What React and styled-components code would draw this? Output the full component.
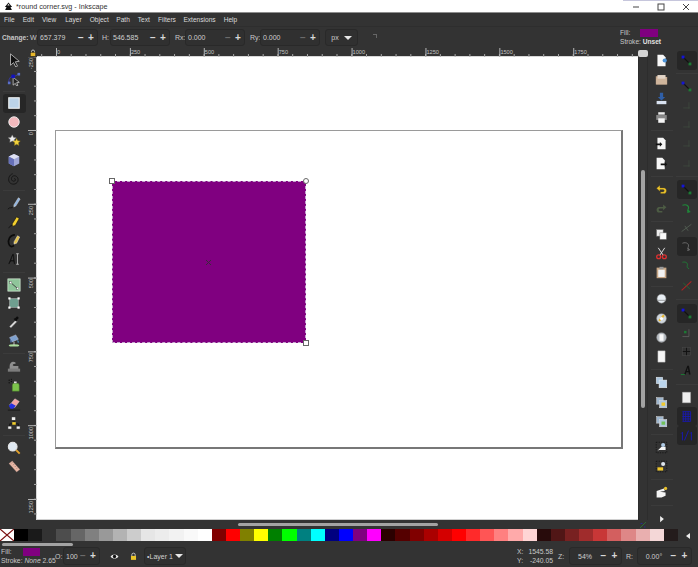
import React from "react";
import styled, { createGlobalStyle } from "styled-components";

const GlobalStyle = createGlobalStyle`
    html, body {
        margin: 0;
        padding: 0;
        overflow: hidden;
        background: #333;
    }
    * {
        box-sizing: border-box;
    }
`

const Window = styled.div`
    width: 698px;
    height: 567px;
    display: flex;
    flex-direction: column;
    overflow: hidden;
    background: #333333;
    color: #d8d8d8;
    font-family: "Liberation Sans", sans-serif;
    font-size: 7px;
`

const TitleBar = styled.div`
    height: 13px;
    flex: none;
    display: flex;
    align-items: center;
    padding-left: 4px;
    background: #ffffff;
    border-bottom: 1px solid #8d8d8d;
    color: #333;
    font-size: 7.2px;
`

const TitleText = styled.span`
    margin-left: 3px;
`

const WindowButtons = styled.div`
    margin-left: auto;
    display: flex;
    height: 100%;
    border-top: 1px solid #c6c6dc;
`

const WindowButton = styled.div`
    width: 25px;
    display: flex;
    align-items: center;
    justify-content: center;
`

const MenuBar = styled.div`
    height: 13px;
    flex: none;
    display: flex;
    align-items: center;
    padding-left: 4px;
    color: #dcdcdc;
    font-size: 6.6px;
`

const MenuItem = styled.span`
    margin-right: ${p => p.$gap}px;
`

const ControlBar = styled.div`
    height: 22px;
    flex: none;
    display: flex;
    align-items: center;
    padding-left: 2px;
    border-top: 1px solid #2e2e2e;
`

const Label = styled.span`
    flex: none;
    width: ${p => p.$w}px;
    margin-left: ${p => p.$ml || 0}px;
    font-weight: ${p => (p.$bold ? 700 : 400)};
    font-size: ${p => (p.$bold ? 6.6 : 7)}px;
    color: #c8c8c8;
    white-space: nowrap;
`

const Field = styled.div`
    flex: none;
    width: ${p => p.$w}px;
    height: ${p => p.$h || 17}px;
    margin-left: ${p => p.$ml || 0}px;
    display: flex;
    align-items: center;
    padding: 0 1px 0 2px;
    background: #303030;
    border: 1px solid #292929;
    border-radius: 3px;
    white-space: nowrap;
`

const FieldValue = styled.span`
    flex: 1;
    text-align: ${p => p.$align || "left"};
    color: #cfcfcf;
`

const Step = styled.span`
    flex: none;
    width: ${p => p.$w || 10}px;
    text-align: center;
    font-size: 10px;
    line-height: 10px;
    font-weight: 700;
    color: ${p => (p.$dim ? "#6a6a6a" : "#d8d8d8")};
`

const DropCaret = styled.span`
    flex: none;
    width: 0;
    height: 0;
    margin: 0 ${p => p.$mr || 4}px 0 2px;
    border-left: 4px solid transparent;
    border-right: 4px solid transparent;
    border-top: 4px solid #e8e8e8;
`

const CornerMark = styled.span`
    flex: none;
    width: 4px;
    height: 4px;
    margin-left: 15px;
    margin-bottom: 3px;
    border-top: 1px solid #666;
    border-right: 1px solid #666;
`

const StyleBlock = styled.div`
    margin-left: auto;
    margin-right: 40px;
    width: 38px;
    display: flex;
    flex-direction: column;
    font-size: 6.6px;
    line-height: 8.5px;
    color: #c8c8c8;
    white-space: nowrap;
`

const FillRow = styled.div`
    display: flex;
    justify-content: space-between;
    align-items: center;
    width: ${p => p.$w || "auto"};
`

const Swatch = styled.span`
    width: ${p => p.$w}px;
    height: 8px;
    background: #800080;
`

const Strong = styled.b`
    color: #e0e0e0;
`

const Main = styled.div`
    flex: 1;
    min-height: 0;
    display: flex;
`

const ToolColumn = styled.div`
    flex: none;
    width: ${p => p.$w}px;
    display: flex;
    flex-direction: column;
    align-items: center;
    padding-top: ${p => p.$top}px;
`

const ToolButton = styled.div`
    flex: none;
    width: ${p => p.$w}px;
    height: ${p => p.$h}px;
    display: flex;
    align-items: center;
    justify-content: center;
    border-radius: 3px;
    background: ${p => (p.$active ? "#262626" : "transparent")};
`

const ToolSep = styled.div`
    flex: none;
    width: 22px;
    height: ${p => p.$h}px;
    display: flex;
    align-items: center;
    &::after {
        content: "";
        width: 100%;
        height: 1px;
        background: #3b3b3b;
    }
`

const Workspace = styled.div`
    flex: 1;
    min-width: 0;
    display: grid;
    grid-template-columns: 9px 1fr 10px;
    grid-template-rows: 9px 1fr 9px;
`

const RulerCorner = styled.div`
    display: flex;
    align-items: center;
    justify-content: center;
`

const HRuler = styled.div`
    position: relative;
    overflow: hidden;
    background:
        linear-gradient(to right, #b5b5b5 1px, transparent 1px) 19px 0 / 73.9px 9px repeat-x,
        linear-gradient(to right, #a8a8a8 1px, transparent 1px) 4.2px 100% / 14.78px 3px repeat-x,
        linear-gradient(#d8d8d8, #d8d8d8) 0 100% / 100% 1px no-repeat,
        #333;
`

const VRuler = styled.div`
    position: relative;
    overflow: hidden;
    background:
        linear-gradient(#b5b5b5 1px, transparent 1px) 0 -0.8px / 9px 73.8px repeat-y,
        linear-gradient(#a8a8a8 1px, transparent 1px) 100% -0.8px / 3px 14.76px repeat-y,
        linear-gradient(#d8d8d8, #d8d8d8) 100% 0 / 1px 100% no-repeat,
        #333;
`

const HTick = styled.span.attrs(p => ({ style: { left: p.$at } }))`
    position: absolute;
    top: 0;
    font-size: 5.6px;
    line-height: 8px;
    color: #c4c4c4;
`

const VTick = styled.span.attrs(p => ({ style: { top: p.$at } }))`
    position: absolute;
    left: 0;
    font-size: 5.6px;
    line-height: 7px;
    color: #c4c4c4;
    writing-mode: vertical-rl;
    transform: rotate(180deg);
`

const Canvas = styled.div`
    position: relative;
    background: #ffffff;
    overflow: hidden;
    border-bottom: 1px solid #d0d0d0;
`

const Page = styled.div`
    position: absolute;
    left: 18px;
    top: 73px;
    width: 568px;
    height: 319px;
    border: 1px solid #9a9a9a;
    border-right: 2px solid #777;
    border-bottom: 2px solid #777;
    background: #fff;
`

const PurpleRect = styled.div`
    position: absolute;
    left: 75px;
    top: 124px;
    width: 194px;
    height: 162px;
    background: #800080;
    background-clip: border-box;
    border: 1px dashed #c6a8cf;
`

const Handle = styled.div`
    position: absolute;
    left: ${p => p.$x}px;
    top: ${p => p.$y}px;
    width: 6px;
    height: 6px;
    background: #fff;
    border: 1px solid #666;
    border-radius: ${p => (p.$round ? "50%" : "0")};
`

const CenterMark = styled.svg`
    position: absolute;
    left: 168px;
    top: 202px;
`

const VScroll = styled.div`
    display: flex;
    justify-content: center;
    padding-top: 113px;
    background: #333;
    border-left: 1px solid #2d2d2d;
    border-right: 1px solid #2d2d2d;
`

const VThumb = styled.div`
    width: 4px;
    height: 238px;
    border-radius: 2px;
    background: #a3a3a3;
`

const ScrollCap = styled.div`
    grid-column: 3;
    grid-row: 1;
    margin-top: 2px;
    background: #d5d5d5;
    border-radius: 2px;
`

const HScroll = styled.div`
    grid-column: 2;
    padding: 3px 0 0 201px;
    background: #333;
`

const HThumb = styled.div`
    width: ${p => p.$w}px;
    height: 3px;
    border-radius: 2px;
    background: #a3a3a3;
`

const GripCell = styled.div`
    grid-column: 3;
    display: flex;
    align-items: center;
    justify-content: center;
`

const Palette = styled.div`
    height: 12px;
    flex: none;
    display: flex;
    align-items: stretch;
    position: relative;
    padding-right: 20px;
`

const Chip = styled.div`
    width: 14.125px;
    flex: none;
    background: ${p => p.$color};
`

const PaletteArrow = styled.span`
    position: absolute;
    left: 686px;
    top: 4px;
    width: 0;
    height: 0;
    border-top: 3px solid transparent;
    border-bottom: 3px solid transparent;
    border-right: 4px solid #eee;
`

const PaletteScroll = styled.div`
    height: 5px;
    flex: none;
    padding: 2px 0 0 2px;
`

const StatusBar = styled.div`
    height: 21px;
    flex: none;
    display: flex;
    align-items: center;
    padding: 0 6px 1px 1px;
`

const StatusStyle = styled.div`
    flex: none;
    width: 54px;
    font-size: 6.8px;
    line-height: 9px;
    color: #c8c8c8;
    white-space: nowrap;
`

const Italic = styled.i`
    font-style: italic;
`

const StatusIcon = styled.span`
    flex: none;
    margin-left: ${p => p.$ml}px;
    display: flex;
`

const Coords = styled.div`
    margin-left: auto;
    width: 36px;
    font-size: 6.8px;
    line-height: 9.5px;
    color: #c8c8c8;
`

const CoordRow = styled.div`
    display: flex;
    justify-content: space-between;
`

/* tiny toolbar pictures, all in a 16 box */
const ART = {
    selector: <path d="M4 1l0 13 3.500-3 2.500 5 2-1-2.500-5 4.500-.5z" fill="#111" stroke="#ddd" strokeWidth=".8" />,
    node: <><path d="M7 6l0 9 2.500-2 1.500 3 1.500-.8-1.500-3 3-.4z" fill="#222" stroke="#ddd" strokeWidth=".8" /><path d="M2 12C2 7 4 5 7 5s4-1 6-3" fill="none" stroke="#3a3ad0" strokeWidth=".8" /><rect x="5" y="3" width="4" height="4" fill="#1212c0" /><rect x="12" y="1" width="3" height="3" fill="#5a70c8" /><rect x="1" y="11" width="3" height="3" fill="#5a70c8" /></>,
    rect: <rect x="2" y="2" width="12" height="12" fill="#bcd3e8" stroke="#f4f4f4" strokeWidth="1.200" />,
    circle: <circle cx="8" cy="8" r="6" fill="#f3b9bd" stroke="#f4f4f4" strokeWidth="1" />,
    star: <><path d="M6 1l1.500 3 3 .4-2.200 2 .6 3-2.900-1.500-2.800 1.500.5-3-2.200-2 3-.4z" fill="#eee" stroke="#888" strokeWidth=".5" /><path d="M11 5l1.300 2.700 2.900.4-2.100 2 .5 2.900-2.600-1.400-2.600 1.400.5-2.900-2.100-2 2.900-.4z" fill="#f3d33d" stroke="#8a7414" strokeWidth=".5" /></>,
    box: <><path d="M8 1l6 3v8l-6 3-6-3V4z" fill="#9fa6d6" /><path d="M2 4l6 3 6-3-6-3z" fill="#dfe1f2" /><path d="M8 7v8l-6-3V4z" fill="#6670b8" /></>,
    spiral: <path d="M8 8c1-1 2 0 1.600 1.300C9 11 6.500 11 5.500 9.300 4.200 7 6 4 8.800 4.300 12 4.700 13.500 8 12.200 11 10.500 14.500 5.500 14.800 3 12 .5 8.500 2.500 3 6.500 2" fill="none" stroke="#151515" strokeWidth="1.100" />,
    pencil: <><path d="M8 10L13 2l2 1.500-5 8-2.400 1z" fill="#8fb4e0" stroke="#eee" strokeWidth=".5" /><path d="M1 15c2-3 5 0 6-3" fill="none" stroke="#111" strokeWidth="1" /></>,
    pen: <><path d="M6 10l5-8 3 2-4.500 8-3.500 1z" fill="#f2cf2d" stroke="#111" strokeWidth=".7" /><path d="M2 15c1-2 2-3 4-3" fill="none" stroke="#111" strokeWidth="1" /></>,
    callig: <><path d="M8 9l4-7 2.500 1.500-3.500 7-3 1z" fill="#e4c34a" stroke="#eee" strokeWidth=".5" /><path d="M9 1C3 1 1 7 2 11s4 4 6 2" fill="none" stroke="#0b0b0b" strokeWidth="2" /></>,
    text: <><path d="M1 14L6 2h2l1.500 12h-2l-.3-3H4.500L3 14zM5.200 9h1.800L6.600 5z" fill="#111" stroke="#555" strokeWidth=".3" /><path d="M12 2v12M10.500 2h3M10.500 14h3" stroke="#bbb" strokeWidth="1" fill="none" /></>,
    gradient: <><rect x="1" y="1" width="14" height="14" fill="#8fc59a" /><rect x="1" y="1" width="14" height="14" fill="none" stroke="#d8e8d8" strokeWidth=".8" /><path d="M4 5l8 7" stroke="#333" strokeWidth="1" /><rect x="3" y="4" width="2.500" height="2.500" fill="#fff" stroke="#333" strokeWidth=".4" /><rect x="11" y="10.500" width="2.500" height="2.500" fill="#fff" stroke="#333" strokeWidth=".4" /></>,
    mesh: <><rect x="3" y="3" width="10" height="10" fill="#6f9f90" stroke="#bbb" strokeWidth=".6" /><g fill="#fff"><rect x="1.500" y="1.500" width="2.500" height="2.500" /><rect x="12" y="1.500" width="2.500" height="2.500" /><rect x="1.500" y="12" width="2.500" height="2.500" /><rect x="12" y="12" width="2.500" height="2.500" /></g></>,
    dropper: <><path d="M3 13L10 6l1.500 1.500-7 7z" fill="#ddd" stroke="#999" strokeWidth=".4" /><path d="M9 4l2-2c1-1 3 1 2 2l-2 2 .6.6-1 1-3-3 1-1z" fill="#0c0c0c" /></>,
    bucket: <><path d="M3 4l7-3 3 5-7 3z" fill="#7ea1cf" stroke="#ccd" strokeWidth=".5" /><path d="M3 4l3 5-2 1z" fill="#4c6fa8" /><path d="M12 6c1 2 2 3 1 4s-1-2-1-4z" fill="#4da3d8" /><ellipse cx="8" cy="13" rx="6" ry="1.400" fill="#a9dc9a" /><path d="M8 9v4" stroke="#ccc" /></>,
    tweak: <><path d="M3 12V8c0-3 2-5 4-5s3 1 3 2l-3 1c-1 1 0 2 1 2h5v4z" fill="#8f8f8f" /><rect x="1" y="11" width="14" height="3.500" fill="#7c7c7c" /></>,
    spray: <><path d="M7 6h6l1 2v7H6V8z" fill="#7dc44c" stroke="#3d6b22" strokeWidth=".5" /><rect x="8" y="4" width="3" height="2" fill="#ddd" /><g fill="#111"><circle cx="5" cy="4" r=".8" /><circle cx="2.500" cy="2.500" r=".8" /><circle cx="2.500" cy="5.500" r=".8" /><circle cx="5" cy="1.500" r=".7" /></g></>,
    eraser: <><path d="M3 9l6-7 5 3-5 7z" fill="#f4a3a3" stroke="#eee" strokeWidth=".4" /><path d="M2 10l3-3 5 3-3 3.500H4z" fill="#2630e0" /><path d="M1 15h14" stroke="#111" strokeWidth=".8" /></>,
    connector: <><path d="M8 4v4M3 12V9h10v3" stroke="#111" strokeWidth="1" fill="none" /><rect x="5" y="1" width="5" height="4" fill="#eee" stroke="#222" strokeWidth=".7" /><rect x="6" y="7" width="4" height="3" fill="#f0cd2f" /><rect x="1" y="11.500" width="4.500" height="3.500" fill="#eee" stroke="#222" strokeWidth=".7" /><rect x="10.500" y="11.500" width="4.500" height="3.500" fill="#eee" stroke="#222" strokeWidth=".7" /></>,
    zoom: <><circle cx="6.500" cy="6.500" r="5" fill="#dfe9f2" stroke="#e8e8e8" strokeWidth="1.200" /><path d="M10.500 10.500l4 4" stroke="#e2a22c" strokeWidth="2.200" /></>,
    measure: <><path d="M2 5l4-3 9 10-4 3z" fill="#e7b5a4" stroke="#333" strokeWidth=".4" /><path d="M5 5l1-1M7 7l1-1M9 9l1-1M11 11l1-1" stroke="#555" strokeWidth=".6" /></>,
    docNew: <><path d="M3 1h7l3 3v11H3z" fill="#f8f8f8" /><circle cx="12" cy="8" r="2.600" fill="#4d94d8" /></>,
    open: <><path d="M1 4h5l1 1h8v9H1z" fill="#c6a78b" /><rect x="3" y="2.500" width="10" height="5" fill="#e2d4c7" /><rect x="1.500" y="7" width="13" height="7" fill="#cfb59c" /></>,
    save: <><path d="M6 1h4v5h2.500L8 10.500 3.500 6H6z" fill="#2f5fa8" /><rect x="2" y="11" width="12" height="4" fill="#d9e2f0" /></>,
    print: <><rect x="4" y="1.500" width="8" height="3" fill="#eee" /><rect x="1.500" y="5" width="13" height="6" fill="#888" /><rect x="4" y="9" width="8" height="5.500" fill="#f4f4f4" /></>,
    import: <><path d="M3 1h7l3 3v11H3z" fill="#f6f6f6" /><path d="M1 8h5V6l3 3-3 3v-2H1z" fill="#111" /></>,
    export: <><path d="M2 1h7l3 3v11H2z" fill="#f6f6f6" /><path d="M7 8h5V6l3 3-3 3v-2H7z" fill="#111" /></>,
    undo: <path d="M6 3L2 6.500 6 10V8h4c2 0 2 3 0 3H7v2h4c4 0 4-7 0-7H6z" fill="#efc62d" stroke="#7b6410" strokeWidth=".4" />,
    redo: <path d="M10 3l4 3.500-4 3.500V8H6c-2 0-2 3 0 3h3v2H5C1 13 1 6 5 6h5z" fill="#4d5c44" />,
    copy: <><rect x="2" y="2" width="8" height="8" fill="#eee" stroke="#777" strokeWidth=".6" /><rect x="6" y="6" width="8" height="8" fill="#fafafa" stroke="#777" strokeWidth=".6" /></>,
    cut: <><path d="M4 1l6 9M12 1L6 10" stroke="#ddd" strokeWidth="1.200" /><circle cx="4.500" cy="12" r="2.400" fill="none" stroke="#e03030" strokeWidth="1.600" /><circle cx="11.500" cy="12" r="2.400" fill="none" stroke="#e03030" strokeWidth="1.600" /></>,
    paste: <><rect x="2" y="2" width="12" height="13" fill="#c6a584" /><rect x="4" y="4.500" width="8" height="9" fill="#f2f2f2" /><rect x="5.500" y="1" width="5" height="3" fill="#999" /></>,
    zoomSel: <><circle cx="8" cy="7" r="5.500" fill="#e8eef4" stroke="#888" strokeWidth=".7" /><path d="M3 9h10" stroke="#777" strokeWidth=".8" /></>,
    zoomDraw: <><circle cx="8" cy="8" r="6" fill="#cfd6dd" stroke="#888" strokeWidth=".6" /><path d="M5 11L11 4" stroke="#e8b52e" strokeWidth="2.400" /><circle cx="8" cy="8" r="2" fill="#fff" /></>,
    zoomPage: <><circle cx="8" cy="8" r="6" fill="#b8bec4" stroke="#888" strokeWidth=".6" /><rect x="5.500" y="4" width="5" height="8" fill="#fafafa" /></>,
    page: <path d="M3.500 1h9v14h-9z" fill="#f6f6f6" stroke="#999" strokeWidth=".5" />,
    dup: <><rect x="1.500" y="1.500" width="8" height="8" fill="#aac6e0" stroke="#eee" strokeWidth=".6" /><rect x="5" y="5" width="9.500" height="9.500" fill="#bcd6ee" stroke="#eee" strokeWidth=".6" /></>,
    clone: <><rect x="2" y="2" width="8" height="8" fill="#9eb6ce" stroke="#ddd" strokeWidth=".6" /><rect x="5.500" y="5.500" width="9" height="9" fill="#aec6de" stroke="#ddd" strokeWidth=".6" /><rect x="8" y="8" width="4.500" height="4" fill="#f0c82c" /></>,
    unlink: <><rect x="2" y="2" width="8" height="8" fill="#9eb6ce" stroke="#ddd" strokeWidth=".6" /><rect x="5.500" y="5.500" width="9" height="9" fill="#aec6de" stroke="#ddd" strokeWidth=".6" /><rect x="8" y="8" width="4.500" height="4" fill="#6fc05a" /></>,
    group: <><rect x="1.500" y="1.500" width="13" height="13" fill="none" stroke="#111" strokeDasharray="1.500 1.500" /><path d="M3 12l5-5h5v4H5z" fill="#f4f4f4" /><circle cx="10" cy="5" r="2.500" fill="#b0cbe6" /></>,
    ungroup: <><rect x="1.500" y="1.500" width="13" height="13" fill="none" stroke="#111" strokeDasharray="1.500 1.500" /><path d="M3 9h7v4H3z" fill="#f0c82c" /><circle cx="10" cy="5" r="2.500" fill="#dfe6ee" /></>,
    xml: <><path d="M2 14V6l9-3 1 3-6 1 7 1v4l-5 2z" fill="#f4f4f4" /><circle cx="13" cy="3" r="2" fill="#e8c02a" /></>,
    chevron: <path d="M5 3l6 5-6 5z" fill="#eee" />,
    snapNode: <><path d="M3.500 3.500L12.500 12.500" stroke="#111" strokeWidth="1.600" /><rect x="2" y="2" width="3.500" height="3.500" fill="#1414d8" /><rect x="10.500" y="10.500" width="3.500" height="3.500" fill="#1c7a34" /></>,
    snapFaint: <path d="M4 11h8M11 4v8" stroke="#3d4a3f" strokeWidth="1" />,
    snapCurve: <path d="M3 4c5-2 9 1 7 5-1 2-1 3 1 3m-2 1l3-1-2-2" fill="none" stroke="#1f8a3a" strokeWidth="1.300" />,
    snapCross: <path d="M2 13L14 4M6 6l4 6" stroke="#505a50" strokeWidth="1.200" />,
    snapDark: <path d="M3 4c5-2 9 1 7 5-1 2-1 3 1 3m-2 1l3-1-2-2" fill="none" stroke="#6a6a6a" strokeWidth="1.200" />,
    snapGreen: <path d="M3 4c4-1 7 1 6 4-.500 2 0 3 2 4" fill="none" stroke="#1f7a35" strokeWidth="1.200" />,
    snapRed: <><path d="M2 14L14 3" stroke="#b02222" strokeWidth="1.300" /><path d="M4 5l8 7" stroke="#1d7032" strokeWidth="1" /></>,
    snapCorner: <><path d="M3 13h8V4" fill="none" stroke="#6a6a6a" strokeWidth=".8" /><rect x="5" y="6" width="3" height="3" fill="#1c7a34" /></>,
    snapCenter: <><path d="M8 3v10M3 8h10" stroke="#111" strokeWidth="1.200" /><rect x="3" y="3" width="10" height="10" fill="none" stroke="#4a4a4a" strokeWidth=".6" /></>,
    snapText: <><path d="M5 13L9 2h2l2 11h-2l-.4-3H7.800L7 13zM8.300 8.500h2l-.7-4z" fill="#111" /><path d="M1 13h5" stroke="#1c7a34" strokeWidth="1.200" /></>,
    snapPage: <path d="M3 1.500h10v13H3z" fill="#f0f0f0" stroke="#aaa" strokeWidth=".5" />,
    snapGrid: <path d="M3 2h10M3 5h10M3 8h10M3 11h10M3 14h10M4 2v12M7 2v12M10 2v12M13 2v12" stroke="#1616c8" strokeWidth=".9" />,
    snapGuide: <path d="M3 14V4L1.500 5.500M5.500 14L10.500 2M14 14V4l-1.500 1.500" fill="none" stroke="#1616c8" strokeWidth="1" />,
    inkscape: <><path d="M8 1L1.500 9h3L2 14h12l-2.500-5h3z" fill="#111" /><path d="M8 3l-2 3h4z" fill="#eee" /></>,
    eye: <><path d="M1 8c3-5 11-5 14 0-3 5-11 5-14 0z" fill="#eee" /><circle cx="8" cy="8" r="3" fill="#111" /></>,
    lock: <><path d="M5 7V5a3 3 0 0 1 6 0v2" fill="none" stroke="#eee" strokeWidth="1.300" /><rect x="3.500" y="7" width="9" height="7" fill="#eac52a" /></>,
    rulerLock: <><path d="M5 7V5a3 3 0 0 1 6 0v2" fill="none" stroke="#ddd" strokeWidth="1.600" /><rect x="3" y="7" width="10" height="7.500" fill="#e6b62a" stroke="#111" strokeWidth=".6" /></>,
    grip: <><path d="M2 14L14 2" stroke="#2a6a38" strokeWidth="2" /><path d="M3 5h4M10 12h3" stroke="#2a2a90" strokeWidth="2" /></>,
}

const Icon = ({ name, size = 14 }) => (
    <svg width={size} height={size} viewBox="0 0 16 16">{ART[name]}</svg>
)

const LEFT_TOOLS = [
    ["selector"], ["node"], 6,
    ["rect", true], ["circle"], ["star"], ["box"], ["spiral"], 5.5,
    ["pencil"], ["pen"], ["callig"], ["text"], 6.5,
    ["gradient"], ["mesh"], ["dropper"], ["bucket"], 6.5,
    ["tweak"], ["spray"], ["eraser"], ["connector"], 6,
    ["zoom"], ["measure"],
]

const RIGHT_TOOLS = [
    ["docNew"], ["open"], ["save"], ["print"], 7,
    ["import"], ["export"], 7,
    ["undo"], ["redo"], 7,
    ["copy"], ["cut"], ["paste"], 7,
    ["zoomSel"], ["zoomDraw"], ["zoomPage"], ["page"], 7,
    ["dup"], ["clone"], ["unlink"], 7,
    ["group"], ["ungroup"], 7,
    ["xml"], 7,
    ["chevron"],
]

const SNAP_TOOLS = [
    ["snapNode", true], 7,
    ["snapNode"], ["snapFaint"], ["snapFaint"], ["snapFaint"], ["snapFaint"], 7,
    ["snapNode", true], ["snapCurve"], ["snapCross"], ["snapDark", true], ["snapGreen"], ["snapRed"], 9,
    ["snapNode", true], ["snapCorner"], ["snapCenter"], ["snapText"], 7,
    ["snapPage"], ["snapGrid", true], ["snapGuide", true],
]

const Toolbar = ({ items, width, top, btnW, btnH, iconSize }) => (
    <ToolColumn $w={width} $top={top}>
        {items.map((item, i) =>
            typeof item === "number"
                ? <ToolSep key={i} $h={item} />
                : (
                    <ToolButton key={i} $w={btnW} $h={btnH} $active={item[1]}>
                        <Icon name={item[0]} size={item[0] === "chevron" ? 10 : iconSize} />
                    </ToolButton>
                )
        )}
    </ToolColumn>
)

const GRAYS = ["#000000", "#1a1a1a", "#333333", "#4d4d4d", "#666666", "#808080", "#999999", "#b3b3b3", "#cccccc", "#e6e6e6", "#ececec", "#f2f2f2", "#f9f9f9", "#ffffff"]
const BRIGHTS = ["#800000", "#ff0000", "#808000", "#ffff00", "#008000", "#00ff00", "#008080", "#00ffff", "#000080", "#0000ff", "#800080", "#ff00ff"]
const REDS = ["#2b0000", "#550000", "#800000", "#aa0000", "#d40000", "#ff0000", "#ff2a2a", "#ff5555", "#ff8080", "#ffaaaa", "#ffd5d5"]
const MUTED = ["#280b0b", "#501616", "#782121", "#a02c2c", "#c83737", "#d35f5f", "#de8787", "#e9afaf", "#f4d7d7", "#241c1c"]

const NoneChip = () => (
    <svg width="14" height="12" viewBox="0 0 14 12">
        <rect width="14" height="12" fill="#fff" />
        <path d="M0 0l14 12M14 0L0 12" stroke="#7a1010" strokeWidth="1.200" />
    </svg>
)

const H_LABELS = ["0", "250", "500", "750", "1000", "1250", "1500", "1750"]
const V_LABELS = ["-250", "0", "250", "500", "750", "1000", "1250"]

const NumberField = ({ w, h, ml, value, dim, align, stepW }) => (
    <Field $w={w} $h={h} $ml={ml}>
        <FieldValue $align={align}>{value}</FieldValue>
        <Step $dim={dim} $w={stepW}>−</Step>
        <Step $w={stepW}>+</Step>
    </Field>
)

const App = () => {
    return (
        <Window>
            <GlobalStyle />
            <TitleBar>
                <Icon name="inkscape" size={9} />
                <TitleText>*round corner.svg - Inkscape</TitleText>
                <WindowButtons>
                    <WindowButton>
                        <svg width="8" height="8" viewBox="0 0 8 8"><path d="M1 4h6" stroke="#444" /></svg>
                    </WindowButton>
                    <WindowButton>
                        <svg width="8" height="8" viewBox="0 0 8 8"><rect x="1" y="1" width="6" height="6" fill="none" stroke="#444" /></svg>
                    </WindowButton>
                    <WindowButton>
                        <svg width="8" height="8" viewBox="0 0 8 8"><path d="M1 1l6 6M7 1L1 7" stroke="#444" /></svg>
                    </WindowButton>
                </WindowButtons>
            </TitleBar>

            <MenuBar>
                <MenuItem $gap={8}>File</MenuItem>
                <MenuItem $gap={8}>Edit</MenuItem>
                <MenuItem $gap={9}>View</MenuItem>
                <MenuItem $gap={8}>Layer</MenuItem>
                <MenuItem $gap={7.5}>Object</MenuItem>
                <MenuItem $gap={8}>Path</MenuItem>
                <MenuItem $gap={8}>Text</MenuItem>
                <MenuItem $gap={7.5}>Filters</MenuItem>
                <MenuItem $gap={8}>Extensions</MenuItem>
                <MenuItem $gap={0}>Help</MenuItem>
            </MenuBar>

            <ControlBar>
                <Label $w={28} $bold>Change:</Label>
                <Label $w={7}>W:</Label>
                <NumberField w={61} value="657.379" />
                <Label $w={8} $ml={4}>H:</Label>
                <NumberField w={60} value="546.585" />
                <Label $w={10} $ml={5}>Rx:</Label>
                <NumberField w={60} value="0.000" dim />
                <Label $w={10} $ml={5}>Ry:</Label>
                <NumberField w={60} value="0.000" dim />
                <Field $w={33} $ml={5}>
                    <FieldValue $align="center">px</FieldValue>
                    <DropCaret />
                </Field>
                <CornerMark />
                <StyleBlock>
                    <FillRow>Fill:<Swatch $w={18} /></FillRow>
                    <div>Stroke: <Strong>Unset</Strong></div>
                </StyleBlock>
            </ControlBar>

            <Main>
                <Toolbar items={LEFT_TOOLS} width={28} top={2.5} btnW={23} btnH={18.8} iconSize={14} />
                <Workspace>
                    <RulerCorner><Icon name="rulerLock" size={8} /></RulerCorner>
                    <HRuler>
                        {H_LABELS.map((label, i) => <HTick key={label} $at={20 + i * 73.9}>{label}</HTick>)}
                    </HRuler>
                    <ScrollCap />
                    <VRuler>
                        {V_LABELS.map((label, i) => <VTick key={label} $at={1 + i * 73.8}>{label}</VTick>)}
                    </VRuler>
                    <Canvas>
                        <Page />
                        <PurpleRect />
                        <Handle $x={72} $y={121} />
                        <Handle $x={266} $y={121} $round />
                        <Handle $x={266} $y={283} />
                        <CenterMark width="7" height="7" viewBox="0 0 7 7">
                            <path d="M1 1l5 5M6 1L1 6" stroke="#3a2a3a" strokeWidth="1" />
                        </CenterMark>
                    </Canvas>
                    <VScroll><VThumb /></VScroll>
                    <HScroll><HThumb $w={200} /></HScroll>
                    <GripCell><Icon name="grip" size={8} /></GripCell>
                </Workspace>
                <Toolbar items={RIGHT_TOOLS} width={27} top={2.5} btnW={23} btnH={19.2} iconSize={13} />
                <Toolbar items={SNAP_TOOLS} width={23} top={2.5} btnW={20} btnH={19.2} iconSize={13} />
            </Main>

            <Palette>
                <NoneChip />
                {[...GRAYS, ...BRIGHTS, ...REDS, ...MUTED].map((color, i) => <Chip key={i} $color={color} />)}
                <PaletteArrow />
            </Palette>
            <PaletteScroll><HThumb $w={71} /></PaletteScroll>

            <StatusBar>
                <StatusStyle>
                    <FillRow $w="39px">Fill:<Swatch $w={17} /></FillRow>
                    <div>Stroke: <Italic>None</Italic> 2.65</div>
                </StatusStyle>
                <Label $w={8}>O:</Label>
                <NumberField w={37} h={18} value="100" dim />
                <StatusIcon $ml={10}><Icon name="eye" size={9} /></StatusIcon>
                <StatusIcon $ml={10}><Icon name="lock" size={9} /></StatusIcon>
                <Field $w={42} $h={18} $ml={6}>
                    <FieldValue $align="center">•Layer 1</FieldValue>
                    <DropCaret $mr={1} />
                </Field>
                <Coords>
                    <CoordRow><span>X:</span><span>1545.58</span></CoordRow>
                    <CoordRow><span>Y:</span><span>-240.05</span></CoordRow>
                </Coords>
                <Label $w={11} $ml={5}>Z:</Label>
                <NumberField w={53} h={18} value="54%" align="center" stepW={11} />
                <Label $w={11} $ml={4}>R:</Label>
                <NumberField w={55} h={18} value="0.00°" align="center" stepW={11} />
            </StatusBar>
        </Window>
    )
}

export default App;
